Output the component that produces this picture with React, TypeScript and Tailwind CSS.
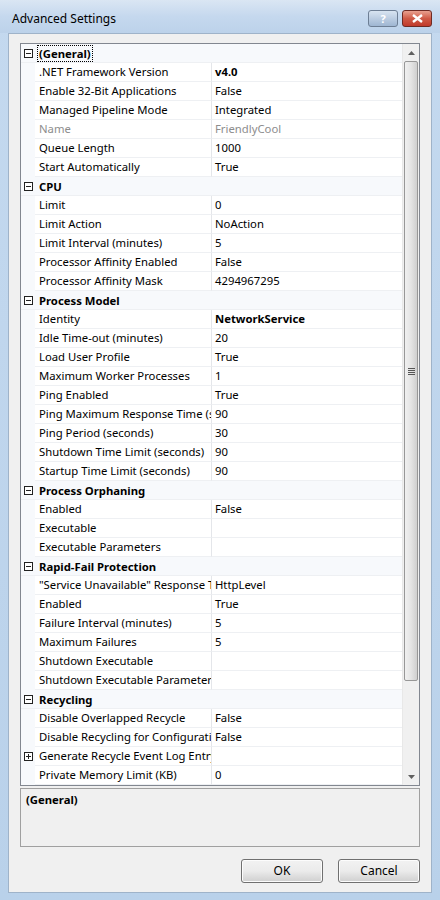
type Row =
  | { kind: 'cat'; label: string; expanded?: boolean }
  | { kind: 'prop'; label: string; value?: string; bold?: boolean; gray?: boolean; plus?: boolean }

const ROWS: Row[] = [
  { kind: 'cat', label: '(General)' },
  { kind: 'prop', label: '.NET Framework Version', value: 'v4.0', bold: true },
  { kind: 'prop', label: 'Enable 32-Bit Applications', value: 'False' },
  { kind: 'prop', label: 'Managed Pipeline Mode', value: 'Integrated' },
  { kind: 'prop', label: 'Name', value: 'FriendlyCool', gray: true },
  { kind: 'prop', label: 'Queue Length', value: '1000' },
  { kind: 'prop', label: 'Start Automatically', value: 'True' },
  { kind: 'cat', label: 'CPU' },
  { kind: 'prop', label: 'Limit', value: '0' },
  { kind: 'prop', label: 'Limit Action', value: 'NoAction' },
  { kind: 'prop', label: 'Limit Interval (minutes)', value: '5' },
  { kind: 'prop', label: 'Processor Affinity Enabled', value: 'False' },
  { kind: 'prop', label: 'Processor Affinity Mask', value: '4294967295' },
  { kind: 'cat', label: 'Process Model' },
  { kind: 'prop', label: 'Identity', value: 'NetworkService', bold: true },
  { kind: 'prop', label: 'Idle Time-out (minutes)', value: '20' },
  { kind: 'prop', label: 'Load User Profile', value: 'True' },
  { kind: 'prop', label: 'Maximum Worker Processes', value: '1' },
  { kind: 'prop', label: 'Ping Enabled', value: 'True' },
  { kind: 'prop', label: 'Ping Maximum Response Time (seconds)', value: '90' },
  { kind: 'prop', label: 'Ping Period (seconds)', value: '30' },
  { kind: 'prop', label: 'Shutdown Time Limit (seconds)', value: '90' },
  { kind: 'prop', label: 'Startup Time Limit (seconds)', value: '90' },
  { kind: 'cat', label: 'Process Orphaning' },
  { kind: 'prop', label: 'Enabled', value: 'False' },
  { kind: 'prop', label: 'Executable', value: '' },
  { kind: 'prop', label: 'Executable Parameters', value: '' },
  { kind: 'cat', label: 'Rapid-Fail Protection' },
  { kind: 'prop', label: '"Service Unavailable" Response Type', value: 'HttpLevel' },
  { kind: 'prop', label: 'Enabled', value: 'True' },
  { kind: 'prop', label: 'Failure Interval (minutes)', value: '5' },
  { kind: 'prop', label: 'Maximum Failures', value: '5' },
  { kind: 'prop', label: 'Shutdown Executable', value: '' },
  { kind: 'prop', label: 'Shutdown Executable Parameters', value: '' },
  { kind: 'cat', label: 'Recycling' },
  { kind: 'prop', label: 'Disable Overlapped Recycle', value: 'False' },
  { kind: 'prop', label: 'Disable Recycling for Configuration Changes', value: 'False' },
  { kind: 'prop', label: 'Generate Recycle Event Log Entry', value: '', plus: true },
  { kind: 'prop', label: 'Private Memory Limit (KB)', value: '0' },
]

function Box({ minus }: { minus: boolean }) {
  return (
    <svg width="9" height="9" viewBox="0 0 9 9" className="block">
      <rect x="0.5" y="0.5" width="8" height="8" fill="#fff" stroke="#222" />
      <path d="M2 4.5h5" stroke="#222" />
      {!minus && <path d="M4.5 2v5" stroke="#222" />}
    </svg>
  )
}

function GridRow({ row, first }: { row: Row; first: boolean }) {
  if (row.kind === 'cat') {
    return (
      <div className="flex h-[19px] bg-[#f7f9fc] border-b border-[#eef0f3]">
        <div className="w-[14px] flex items-center justify-center">
          <Box minus />
        </div>
        <div className="flex-1 flex items-center pl-[3px]">
          <span className={`font-bold px-px leading-[15px] ${first ? 'outline outline-1 outline-dotted outline-black' : ''}`}>
            {row.label}
          </span>
        </div>
      </div>
    )
  }
  return (
    <div className="flex h-[19px]">
      <div className="w-[14px] bg-[#f7f9fc] flex items-center justify-center">
        {row.plus && <Box minus={false} />}
      </div>
      <div className="w-[177px] flex items-center pl-[4px] overflow-hidden whitespace-nowrap border-b border-[#eef0f3] border-r border-r-[#e4e6ea]">
        <span className={row.gray ? 'text-[#8d8d8d]' : ''}>{row.label}</span>
      </div>
      <div className="flex-1 flex items-center pl-[3px] overflow-hidden whitespace-nowrap border-b border-[#eef0f3]">
        <span className={`${row.bold ? 'font-bold' : ''} ${row.gray ? 'text-[#8d8d8d]' : ''}`}>{row.value}</span>
      </div>
    </div>
  )
}

function Scrollbar() {
  return (
    <div className="w-[17px] flex flex-col bg-[#f0f0f0] border-l border-[#e8e8e8]">
      <div className="h-[17px] flex items-center justify-center">
        <svg width="7" height="4" viewBox="0 0 7 4"><path d="M3.5 0L7 4H0z" fill="#606060" /></svg>
      </div>
      <div className="mx-px h-[620px] rounded-[2px] border border-[#979797] bg-gradient-to-r from-[#f0f0f0] via-[#e4e4e4] to-[#cfcfcf] flex items-center justify-center">
        <div className="flex flex-col gap-px">
          <div className="w-[7px] h-px bg-[#555]" />
          <div className="w-[7px] h-px bg-[#555]" />
          <div className="w-[7px] h-px bg-[#555]" />
          <div className="w-[7px] h-px bg-[#555]" />
        </div>
      </div>
      <div className="flex-1" />
      <div className="h-[17px] flex items-center justify-center">
        <svg width="7" height="4" viewBox="0 0 7 4"><path d="M0 0H7L3.5 4z" fill="#606060" /></svg>
      </div>
    </div>
  )
}

function WinButton({ children }: { children: string }) {
  return (
    <button className="w-[82px] h-[24px] rounded-[3px] border border-[#707070] bg-gradient-to-b from-[#f2f2f2] via-[#ebebeb] to-[#cfcfcf] text-[12px] text-black shadow-[inset_0_0_0_1px_#fcfcfc]">
      {children}
    </button>
  )
}

export default function App() {
  return (
    <div
      className="w-[440px] h-[900px] bg-gradient-to-b from-[#c4d9ef] to-[#b9d1ea] flex flex-col text-[11.3px] text-black"
      style={{ fontFamily: '"Noto Sans", "Open Sans", sans-serif' }}
    >
      {/* title bar */}
      <div className="h-[33px] flex items-start bg-gradient-to-b from-[#dae6f3] via-[#c5d8ee] to-[#bcd2ea]">
        <div className="pl-[12px] pt-[10px] text-[12px] text-black">Advanced Settings</div>
        <div className="ml-auto mt-[10px] mr-[8px] flex gap-[4px]">
          <div className="w-[30px] h-[17px] rounded-[3px] border border-[#6d7e94] bg-gradient-to-b from-[#d8e4f1] to-[#9fb6d2] flex items-center justify-center text-[11px] font-bold text-white leading-none">
            ?
          </div>
          <div className="w-[30px] h-[17px] rounded-[3px] border border-[#6e2a23] bg-gradient-to-b from-[#e8a08f] via-[#cf5a46] to-[#c0392b] flex items-center justify-center">
            <svg width="11" height="9" viewBox="0 0 11 9">
              <path d="M1 1L10 8M10 1L1 8" stroke="#fff" strokeWidth="2.4" />
            </svg>
          </div>
        </div>
      </div>

      {/* client area */}
      <div className="mx-[8px] mb-[7px] flex-1 bg-[#f0f0f0] border border-[#9fb3c9] px-[11px] pt-[9px] flex flex-col">
        <div className="h-[743px] border border-[#828790] bg-white flex">
          <div className="flex-1 flex flex-col overflow-hidden">
            {ROWS.map((r, i) => (
              <GridRow key={i} row={r} first={i === 0} />
            ))}
          </div>
          <Scrollbar />
        </div>

        <div className="mt-[2px] h-[59px] border border-[#a0a0a0] px-[5px] pt-[3px]">
          <div className="font-bold">(General)</div>
        </div>

        <div className="mt-[12px] flex justify-end gap-[15px]">
          <WinButton>OK</WinButton>
          <WinButton>Cancel</WinButton>
        </div>
      </div>
    </div>
  )
}
